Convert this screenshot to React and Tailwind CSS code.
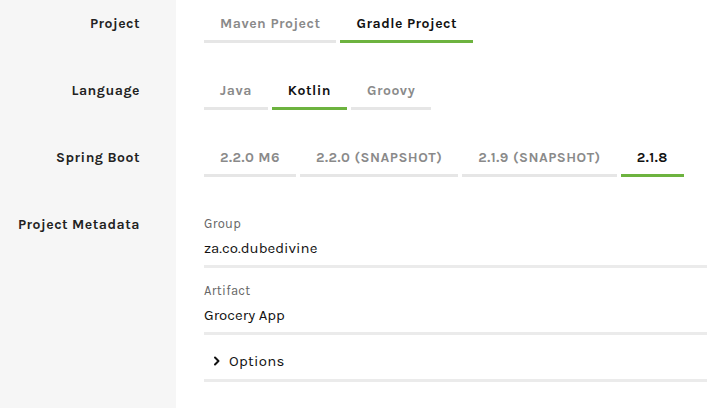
import { useState } from 'react';

const FONT = { fontFamily: 'Karla, Lato, "Liberation Sans", sans-serif' };

const PROJECTS = ['Maven Project', 'Gradle Project'];
const LANGUAGES = ['Java', 'Kotlin', 'Groovy'];
const BOOT_VERSIONS = ['2.2.0 M6', '2.2.0 (SNAPSHOT)', '2.1.9 (SNAPSHOT)', '2.1.8'];

function Label({ children }) {
  return (
    <div className="bg-[#f6f6f6] pr-[36px] pt-[13px] text-right text-[14px] font-bold leading-[22px] tracking-[0.5px] text-[#222]">
      {children}
    </div>
  );
}

function Tabs({ options, value, onChange }) {
  return (
    <div className="flex gap-[4px] pb-[24px] pt-[13px]">
      {options.map((opt) => {
        const active = opt === value;
        return (
          <button
            key={opt}
            onClick={() => onChange(opt)}
            className={
              'border-b-[3px] px-[16px] pb-[5px] text-[14px] font-bold leading-[22px] tracking-[0.5px] ' +
              (active ? 'border-[#6db33f] text-[#111]' : 'border-[#e6e6e6] text-[#8a8a8a]')
            }
          >
            {opt}
          </button>
        );
      })}
    </div>
  );
}

function Field({ label, value }) {
  return (
    <div className="border-b-[3px] border-[#ebebeb] pb-[6px]">
      <div className="text-[13px] leading-[18px] tracking-[0.3px] text-[#666]">{label}</div>
      <div className="mt-[4px] text-[15px] leading-[22px] text-[#111]">{value}</div>
    </div>
  );
}

export default function App() {
  const [project, setProject] = useState('Gradle Project');
  const [language, setLanguage] = useState('Kotlin');
  const [boot, setBoot] = useState('2.1.8');

  return (
    <div
      className="grid min-h-screen grid-cols-[176px_1fr] grid-rows-[auto_auto_auto_1fr] overflow-hidden bg-white"
      style={FONT}
    >
      <Label>Project</Label>
      <div className="pl-[28px]">
        <Tabs options={PROJECTS} value={project} onChange={setProject} />
      </div>

      <Label>Language</Label>
      <div className="pl-[28px]">
        <Tabs options={LANGUAGES} value={language} onChange={setLanguage} />
      </div>

      <Label>Spring Boot</Label>
      <div className="pl-[28px]">
        <Tabs options={BOOT_VERSIONS} value={boot} onChange={setBoot} />
      </div>

      <Label>Project Metadata</Label>
      <div className="pl-[28px] pt-[14px]">
        <Field label="Group" value="za.co.dubedivine" />
        <div className="mt-[14px]">
          <Field label="Artifact" value="Grocery App" />
        </div>
        {/* collapsed options toggle */}
        <div className="mt-[15px] flex items-center gap-[8px] border-b-[3px] border-[#ebebeb] pb-[7px] pl-[9px] text-[15px] leading-[22px] tracking-[0.3px] text-[#111]">
          <svg width="8" height="10" viewBox="0 0 8 10" fill="none">
            <path d="M2 1.5 L5.5 5 L2 8.5" stroke="#111" strokeWidth="2" strokeLinecap="round" strokeLinejoin="round" />
          </svg>
          Options
        </div>
      </div>
    </div>
  );
}
